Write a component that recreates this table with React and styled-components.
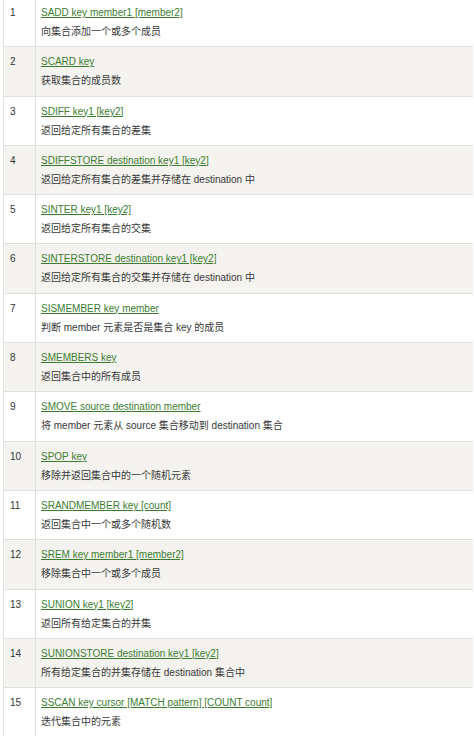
import React from "react";
import styled, { createGlobalStyle } from "styled-components";

const Global = createGlobalStyle`
  html, body { margin: 0; padding: 0; background: #ffffff; }
  body {
    font-family: "Liberation Sans", Arial, "Noto Sans CJK SC", sans-serif;
    font-size: 10px;
    color: #333333;
    overflow: hidden;
  }
`;

const Table = styled.div`
  margin: -3px 1px 0 3px;
  border-left: 1px solid #e2e2e0;
  display: flex;
  flex-direction: column;
`;

const Row = styled.div`
  display: grid;
  grid-template-columns: 32px 1fr;
  height: 49.3px;
  box-sizing: border-box;
  border-top: 1px solid #e0e0de;
  background: ${(p) => (p.$alt ? "#f4f3f0" : "#ffffff")};
`;

const NumCell = styled.div`
  border-right: 1px solid #e0e0de;
  padding: 8px 0 0 6px;
  line-height: 14px;
  color: #333333;
  font-size: 10px;
`;

const Body = styled.div`
  padding: 8px 4px 0 5px;
  display: flex;
  flex-direction: column;
  gap: 5px;
`;

const Cmd = styled.a`
  line-height: 14px;
  color: #3b7d2f;
  text-decoration: underline;
  text-underline-offset: 1px;
  font-size: 10px;
  cursor: pointer;
`;

const Desc = styled.div`
  line-height: 14px;
  color: #383838;
  font-size: 10px;
`;

const rows = [
  ["SADD key member1 [member2]", "向集合添加一个或多个成员"],
  ["SCARD key", "获取集合的成员数"],
  ["SDIFF key1 [key2]", "返回给定所有集合的差集"],
  ["SDIFFSTORE destination key1 [key2]", "返回给定所有集合的差集并存储在 destination 中"],
  ["SINTER key1 [key2]", "返回给定所有集合的交集"],
  ["SINTERSTORE destination key1 [key2]", "返回给定所有集合的交集并存储在 destination 中"],
  ["SISMEMBER key member", "判断 member 元素是否是集合 key 的成员"],
  ["SMEMBERS key", "返回集合中的所有成员"],
  ["SMOVE source destination member", "将 member 元素从 source 集合移动到 destination 集合"],
  ["SPOP key", "移除并返回集合中的一个随机元素"],
  ["SRANDMEMBER key [count]", "返回集合中一个或多个随机数"],
  ["SREM key member1 [member2]", "移除集合中一个或多个成员"],
  ["SUNION key1 [key2]", "返回所有给定集合的并集"],
  ["SUNIONSTORE destination key1 [key2]", "所有给定集合的并集存储在 destination 集合中"],
  ["SSCAN key cursor [MATCH pattern] [COUNT count]", "迭代集合中的元素"],
];

export default function App() {
  return (
    <>
      <Global />
      <Table>
        {rows.map(([cmd, desc], i) => (
          <Row key={cmd} $alt={i % 2 === 1}>
            <NumCell>{i + 1}</NumCell>
            <Body>
              <div>
                <Cmd>{cmd}</Cmd>
              </div>
              <Desc>{desc}</Desc>
            </Body>
          </Row>
        ))}
      </Table>
    </>
  );
}
